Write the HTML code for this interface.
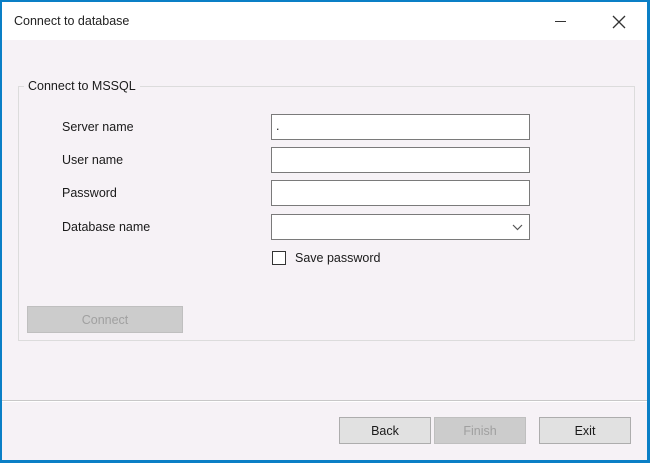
<!DOCTYPE html>
<html><head><style>
*{margin:0;padding:0;box-sizing:border-box}
body{width:650px;height:463px;background:#0a7fc6;font-family:"Liberation Sans",sans-serif;font-size:12.5px;color:#1a1a1a;position:relative;overflow:hidden}
.win{position:absolute;left:2px;top:2px;width:645px;height:458px;background:#f6f2f6}
.title{position:absolute;left:0;top:0;width:645px;height:38px;background:#fff}
.abs{position:absolute}
.inp{position:absolute;left:269px;width:259px;height:26px;background:#fff;border:1px solid #7a7a7a}
.btn{position:absolute;height:27px;border:1px solid #adadad;background:#e1e1e1;text-align:center;line-height:27px;font-size:12.5px}
.dis{background:#cccccc;border-color:#bfbfbf;color:#a0a0a0}
</style></head><body>
<div class="win">
<div class="title">
<div class="abs" style="left:12px;top:12px;font-size:12.5px;color:#222">Connect to database</div>
<div class="abs" style="left:553px;top:19px;width:11px;height:1px;background:#333"></div>
<svg class="abs" style="left:610px;top:13px" width="14" height="14"><path d="M1 1L13 13M13 1L1 13" stroke="#333" stroke-width="1.3"/></svg>
</div>
<div class="abs" style="left:16px;top:84px;width:617px;height:255px;border:1px solid #dcdcdc"></div>
<div class="abs" style="left:22px;top:77px;background:#f6f2f6;padding:0 4px">Connect to MSSQL</div>
<div class="abs" style="left:60px;top:118px">Server name</div>
<div class="abs" style="left:60px;top:151px">User name</div>
<div class="abs" style="left:60px;top:184px">Password</div>
<div class="abs" style="left:60px;top:218px">Database name</div>
<div class="inp" style="top:112px"><span style="position:absolute;left:4px;top:4px">.</span></div>
<div class="inp" style="top:145px"></div>
<div class="inp" style="top:178px"></div>
<div class="inp" style="top:212px"><svg class="abs" style="left:240px;top:9px" width="11" height="7"><path d="M1 1L5.5 5.5L10 1" stroke="#555" fill="none" stroke-width="1.2"/></svg></div>
<div class="abs" style="left:270px;top:249px;width:14px;height:14px;border:1px solid #333;background:#fff"></div>
<div class="abs" style="left:293px;top:249px">Save password</div>
<div class="btn dis" style="left:25px;top:304px;width:156px">Connect</div>
<div class="abs" style="left:0;top:398px;width:645px;height:2px;background:#c8c8c8;border-bottom:1px solid #fff"></div>
<div class="btn" style="left:337px;top:415px;width:92px">Back</div>
<div class="btn dis" style="left:432px;top:415px;width:92px">Finish</div>
<div class="btn" style="left:537px;top:415px;width:92px">Exit</div>
</div>
</body></html>
